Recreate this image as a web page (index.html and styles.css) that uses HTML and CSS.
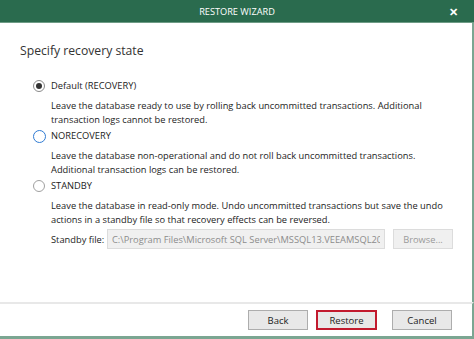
FILE: index.html
```html
<!DOCTYPE html>
<html lang="en">
<head>
    <meta charset="UTF-8">
    <title>Restore Wizard</title>
    <link rel="stylesheet" href="styles.css">
</head>
<body>
    <div class="window">
        <div class="titlebar">
            <span></span>
            <span class="title">RESTORE WIZARD</span>
            <span class="close">&#10005;</span>
        </div>

        <div class="content">
            <h2>Specify recovery state</h2>

            <div class="option">
                <label class="radio-row">
                    <span class="radio checked"></span>
                    <span>Default (RECOVERY)</span>
                </label>
                <p class="desc">Leave the database ready to use by rolling back uncommitted transactions. Additional<br>transaction logs cannot be restored.</p>
            </div>

            <div class="option">
                <label class="radio-row">
                    <span class="radio focused"></span>
                    <span>NORECOVERY</span>
                </label>
                <p class="desc">Leave the database non-operational and do not roll back uncommitted transactions.<br>Additional transaction logs can be restored.</p>
            </div>

            <div class="option">
                <label class="radio-row">
                    <span class="radio"></span>
                    <span>STANDBY</span>
                </label>
                <p class="desc">Leave the database in read-only mode. Undo uncommitted transactions but save the undo<br>actions in a standby file so that recovery effects can be reversed.</p>
            </div>

            <div class="standby-row">
                <span class="standby-label">Standby file:</span>
                <input type="text" class="standby-input" value="C:\Program Files\Microsoft SQL Server\MSSQL13.VEEAMSQL2016\MSSQL\Backup" disabled>
                <button class="browse" disabled>Browse...</button>
            </div>
        </div>

        <div class="footer">
            <button class="btn">Back</button>
            <button class="btn primary">Restore</button>
            <button class="btn">Cancel</button>
        </div>
    </div>
</body>
</html>
```

FILE: styles.css
```css
/* Basic Styles */
body {
    margin: 0;
    padding: 0;
    background-color: #fff;
    font-family: "Open Sans", "Noto Sans", sans-serif;
    color: #1c1c1c;
}
.window {
    width: 474px;
    height: 339px;
    display: flex;
    flex-direction: column;
    box-sizing: border-box;
    border-bottom: 3px solid #7ba692;
}
.titlebar {
    height: 22px;
    background-color: #2a6b4e;
    color: #fff;
    display: grid;
    grid-template-columns: 1fr auto 1fr;
    align-items: center;
    border-bottom: 1px solid #6e9c86;
}
.titlebar .title {
    font-size: 9.2px;
}
.titlebar .close {
    justify-self: end;
    margin-right: 16px;
    font-size: 11px;
    font-weight: bold;
}
.content {
    flex: 1;
    border-right: 2px solid #7ba692;
    padding: 19px 0 0 20px;
}
.content h2 {
    margin: 0 0 19px 0;
    font-size: 12.2px;
    font-weight: normal;
    color: #333;
    line-height: 18px;
}
.option {
    margin-left: 13px;
    margin-bottom: 2px;
}
.radio-row {
    display: flex;
    align-items: center;
    gap: 6px;
    font-size: 9.3px;
    line-height: 14px;
    height: 14px;
}
.radio {
    box-sizing: border-box;
    width: 12px;
    height: 12px;
    border: 1px solid #a0a0a0;
    border-radius: 50%;
    display: flex;
    align-items: center;
    justify-content: center;
    background: #fff;
    flex-shrink: 0;
}
.radio.checked {
    border-color: #8a8a8a;
}
.radio.checked::after {
    content: "";
    width: 6px;
    height: 6px;
    border-radius: 50%;
    background: #333;
}
.radio.focused {
    border: 1.5px solid #2f7bd3;
    width: 13px;
    height: 13px;
    margin-left: -0.5px;
    margin-right: -0.5px;
}
.desc {
    margin: 6px 0 0 18px;
    font-size: 9.3px;
    line-height: 14px;
    white-space: nowrap;
}
.standby-row {
    display: flex;
    align-items: center;
    margin-left: 31px;
    margin-top: 2px;
    font-size: 9.3px;
    white-space: nowrap;
}
.standby-label {
    width: 56px;
}
.standby-input {
    width: 278px;
    height: 20px;
    box-sizing: border-box;
    border: 1px solid #dcdcdc;
    background: #f0f0f0;
    color: #8c8c8c;
    font-family: inherit;
    font-size: 9.3px;
    padding: 0 4px;
}
.browse {
    margin-left: 8px;
    width: 60px;
    height: 20px;
    border: 1px solid #dcdcdc;
    background: #f0f0f0;
    color: #9a9a9a;
    font-family: inherit;
    font-size: 9.3px;
}
.footer {
    height: 32px;
    border-top: 2px solid #e8e8e8;
    border-right: 2px solid #7ba692;
    display: flex;
    justify-content: flex-end;
    align-items: center;
    gap: 8px;
    padding-right: 20px;
}
.btn {
    width: 60px;
    height: 20px;
    border: 1px solid #adadad;
    background: #e8e8e8;
    color: #222;
    font-family: inherit;
    font-size: 9.5px;
    padding: 0;
}
.btn.primary {
    border: 2px solid #c21a2e;
    width: 61px;
    margin-right: 7px;
}
```
